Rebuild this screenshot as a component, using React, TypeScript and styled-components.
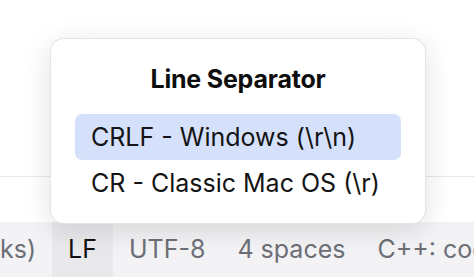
import styled, { createGlobalStyle } from "styled-components";

const GlobalStyle = createGlobalStyle`
  html, body {
    margin: 0;
    padding: 0;
    background: #ffffff;
    font-family: Inter, "Noto Sans", sans-serif;
  }
`;

const Page = styled.div`
  position: relative;
  width: 474px;
  height: 277px;
  overflow: hidden;
  display: flex;
  flex-direction: column;
  background: #ffffff;
`;

const Editor = styled.div`
  flex: 1;
  display: flex;
  flex-direction: column;
`;

const EditorRow = styled.div<{ $height: number; $divider?: boolean }>`
  height: ${(p) => p.$height}px;
  border-bottom: ${(p) => (p.$divider ? "1px solid #e8e8ea" : "none")};
`;

const StatusBar = styled.div`
  height: 55px;
  display: flex;
  align-items: stretch;
  background: #f3f3f5;
  white-space: nowrap;
  overflow: hidden;
`;

const StatusItem = styled.div<{ $active?: boolean; $clipped?: boolean }>`
  display: flex;
  align-items: center;
  padding: 0 16px 0 ${(p) => (p.$clipped ? 0 : 16)}px;
  font-size: 25px;
  line-height: 55px;
  color: ${(p) => (p.$active ? "#121214" : "#6e6f76")};
  background: ${(p) => (p.$active ? "#e9e9ec" : "transparent")};
`;

const Popup = styled.div`
  position: absolute;
  left: 50px;
  top: 38px;
  width: 376px;
  box-sizing: border-box;
  padding: 25px 24px 17px;
  background: #ffffff;
  border: 1px solid rgba(0, 0, 0, 0.1);
  border-radius: 14px;
  box-shadow: 0 6px 28px rgba(0, 0, 0, 0.12);
  display: flex;
  flex-direction: column;
`;

const Title = styled.div`
  font-size: 25px;
  line-height: 30px;
  font-weight: 700;
  letter-spacing: -0.2px;
  color: #0e0e0e;
  text-align: center;
  margin-bottom: 20px;
`;

const Option = styled.div<{ $selected?: boolean }>`
  height: 46px;
  display: flex;
  align-items: center;
  padding: 0 16px;
  border-radius: 7px;
  font-size: 25px;
  color: #141414;
  background: ${(p) => (p.$selected ? "#d5e1fa" : "transparent")};
`;

const statusItems = [
  { label: "ks)", clipped: true },
  { label: "LF", active: true },
  { label: "UTF-8" },
  { label: "4 spaces" },
  { label: "C++: code" },
];

const options = [
  { label: "CRLF - Windows (\\r\\n)", selected: true },
  { label: "CR - Classic Mac OS (\\r)" },
];

export default function App() {
  return (
    <Page>
      <GlobalStyle />
      <Editor>
        <EditorRow $height={176} $divider />
      </Editor>
      <StatusBar>
        {statusItems.map((item) => (
          <StatusItem key={item.label} $active={item.active} $clipped={item.clipped}>
            {item.label}
          </StatusItem>
        ))}
      </StatusBar>
      <Popup>
        <Title>Line Separator</Title>
        {options.map((o) => (
          <Option key={o.label} $selected={o.selected}>
            {o.label}
          </Option>
        ))}
      </Popup>
    </Page>
  );
}
